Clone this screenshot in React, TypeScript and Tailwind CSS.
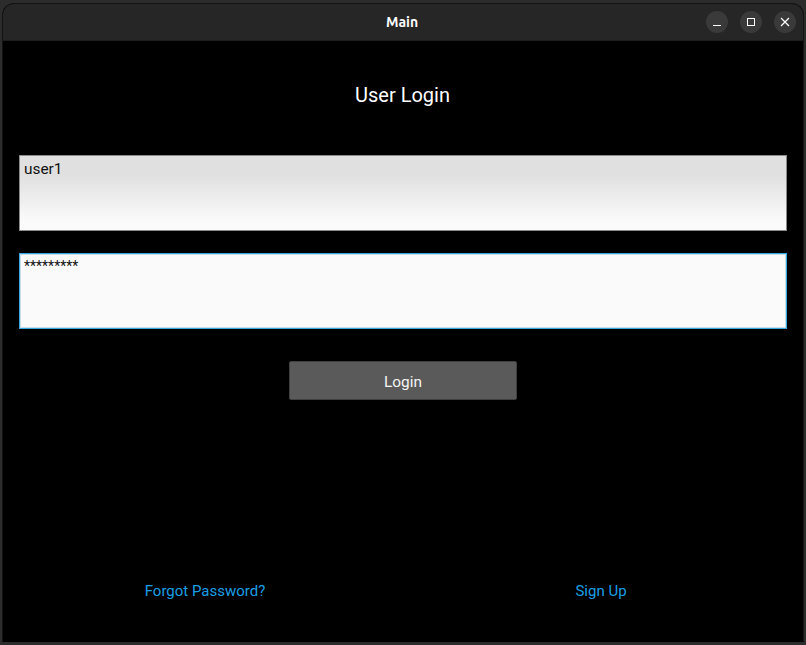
export default function App() {
  return (
    <div className="w-[806px] h-[645px] bg-[#2c2c2c] pt-[3px] pl-[2px] pr-[2px] pb-[3px] overflow-hidden" style={{ fontFamily: "Roboto, sans-serif" }}>
      <div className="w-[802px] h-[639px] bg-black rounded-t-[12px] border-t border-x border-[#141414] flex flex-col overflow-hidden">
        <div className="h-[37px] shrink-0 bg-[#262626] border-b border-[#1c1c1c] relative flex items-center justify-center">
          <span className="text-[14px] font-bold text-white pr-[2px]" style={{ fontFamily: "Ubuntu, 'Noto Sans', sans-serif" }}>Main</span>
          <div className="absolute right-[7px] top-[7px] flex gap-[12px]">
            <div className="w-[22px] h-[22px] rounded-full bg-[#3a3a3a] flex items-center justify-center">
              <svg width="10" height="10" viewBox="0 0 10 10"><path d="M1 8.5h8" stroke="#fff" strokeWidth="1" /></svg>
            </div>
            <div className="w-[22px] h-[22px] rounded-full bg-[#3a3a3a] flex items-center justify-center">
              <svg width="10" height="10" viewBox="0 0 10 10"><rect x="1.5" y="1.5" width="7" height="7" fill="none" stroke="#fff" strokeWidth="1" /></svg>
            </div>
            <div className="w-[22px] h-[22px] rounded-full bg-[#3a3a3a] flex items-center justify-center">
              <svg width="10" height="10" viewBox="0 0 10 10"><path d="M1 1l8 8M9 1l-8 8" stroke="#fff" strokeWidth="1.2" /></svg>
            </div>
          </div>
        </div>
        <div className="flex-1 flex flex-col px-[16px]">
          <div className="h-[114px] shrink-0 pt-[40px] pr-[1px] text-center text-[20px] leading-[28px] text-white">User Login</div>
          <div className="h-[76px] shrink-0 border border-[#8a8a8a] bg-gradient-to-b from-[#e0e0e0] from-25% to-[#fbfbfb] to-90% px-[4px] pt-[4px] text-[15.4px] leading-[18px] text-[#111]">user1</div>
          <div className="h-[76px] mt-[22px] shrink-0 border border-[#38a8dc] shadow-[inset_0_0_0_1px_#c8dfe9] bg-[#fafafa] px-[4px] pt-[3px] text-[14px] leading-[19px] text-[#111]">*********</div>
          <button className="mt-[32px] mx-auto w-[228px] h-[39px] shrink-0 bg-[#5a5a5a] border border-[#404040] rounded-[2px] text-[15.4px] text-[#f4f4f4] pt-[4px]">Login</button>
          <div className="mt-[181px] flex text-[15px] leading-[20px] text-[#1a9fe6]">
            <a className="w-[372px] text-center">Forgot Password?</a>
            <a className="ml-[24px] w-[372px] text-center">Sign Up</a>
          </div>
        </div>
      </div>
    </div>
  );
}
